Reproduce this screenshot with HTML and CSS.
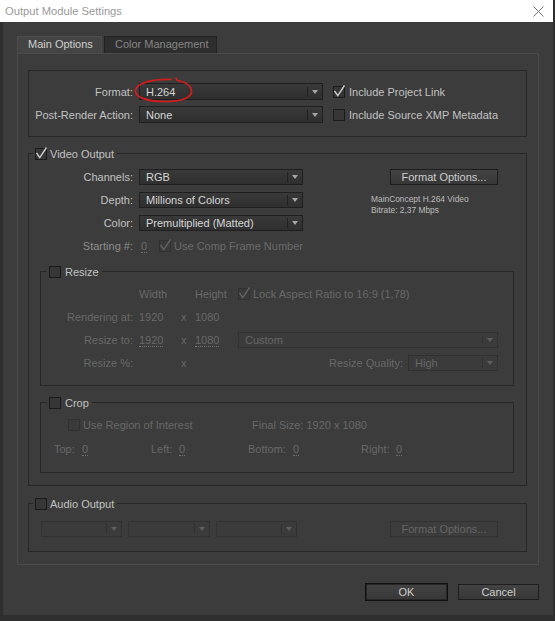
FILE: index.html
```html
<!DOCTYPE html>
<html>
<head>
<meta charset="utf-8">
<title>Output Module Settings</title>
<link rel="stylesheet" href="styles.css">
</head>
<body>
<div class="screen">
  <div class="titlebar">
    <span class="title">Output Module Settings</span>
    <svg class="close" width="11" height="11" viewBox="0 0 11 11"><path d="M0.5 0.5 L10.5 10.5 M10.5 0.5 L0.5 10.5"/></svg>
  </div>
  <div class="dialog">
    <div class="tabs">
      <div class="tab active">Main Options</div>
      <div class="tab inactive">Color Management</div>
    </div>
    <div class="panel">
      <div class="box format-box">
        <div class="form-grid">
          <span class="lbl">Format:</span>
          <div class="dd"><span class="v">H.264</span><i class="arr"></i></div>
          <div class="cb-row"><span class="cb"><svg class="chk" viewBox="0 0 12 12"><path d="M1.5 5 L4.8 9.6 L11.5 -0.5"/></svg></span><span>Include Project Link</span></div>
          <span class="lbl">Post-Render Action:</span>
          <div class="dd"><span class="v">None</span><i class="arr"></i></div>
          <div class="cb-row"><span class="cb"></span><span>Include Source XMP Metadata</span></div>
        </div>
      </div>

      <div class="group video">
        <div class="group-title"><span class="cb"><svg class="chk" viewBox="0 0 12 12"><path d="M1.5 5 L4.8 9.6 L11.5 -0.5"/></svg></span><span>Video Output</span></div>
        <div class="video-top">
          <div class="vgrid">
            <span class="lbl">Channels:</span>
            <div class="dd"><span class="v">RGB</span><i class="arr"></i></div>
            <span class="lbl">Depth:</span>
            <div class="dd"><span class="v">Millions of Colors</span><i class="arr"></i></div>
            <span class="lbl">Color:</span>
            <div class="dd"><span class="v">Premultiplied (Matted)</span><i class="arr"></i></div>
            <span class="lbl semi">Starting #:</span>
            <div class="start-cell">
              <span class="num"><span class="field">0</span></span>
              <span class="cb dis"><svg class="chk" viewBox="0 0 12 12"><path d="M1.5 5 L4.8 9.6 L11.5 -0.5"/></svg></span>
              <span class="dtext">Use Comp Frame Number</span>
            </div>
          </div>
          <div class="info">
            <div class="btn fmt-btn">Format Options...</div>
            <div class="meta">MainConcept H.264 Video<br>Bitrate: 2,37 Mbps</div>
          </div>
        </div>

        <div class="group sub resize">
          <div class="group-title"><span class="cb"></span><span>Resize</span></div>
          <div class="rgrid">
            <span></span>
            <span>Width</span>
            <span></span>
            <span>Height</span>
            <div class="lock"><span class="cb dis"><svg class="chk" viewBox="0 0 12 12"><path d="M1.5 5 L4.8 9.6 L11.5 -0.5"/></svg></span><span>Lock Aspect Ratio to 16:9 (1,78)</span></div>

            <span class="rl">Rendering at:</span>
            <span>1920</span>
            <span>x</span>
            <span>1080</span>
            <span></span>

            <span class="rl">Resize to:</span>
            <span><span class="field">1920</span></span>
            <span>x</span>
            <span><span class="field">1080</span></span>
            <div class="dd dis"><span class="v">Custom</span><i class="arr"></i></div>

            <span class="rl">Resize %:</span>
            <span></span>
            <span>x</span>
            <span></span>
            <div class="quality"><span>Resize Quality:</span><div class="dd dis q-dd"><span class="v">High</span><i class="arr"></i></div></div>
          </div>
        </div>

        <div class="group sub crop">
          <div class="group-title"><span class="cb"></span><span>Crop</span></div>
          <div class="crop-r1">
            <div class="roi"><span class="cb dis"></span><span>Use Region of Interest</span></div>
            <span>Final Size: 1920 x 1080</span>
          </div>
          <div class="crop-r2">
            <span>Top:</span><span><span class="field">0</span></span>
            <span>Left:</span><span><span class="field">0</span></span>
            <span>Bottom:</span><span><span class="field">0</span></span>
            <span>Right:</span><span><span class="field">0</span></span>
          </div>
        </div>
      </div>

      <div class="group audio">
        <div class="group-title"><span class="cb"></span><span>Audio Output</span></div>
        <div class="audio-row">
          <div class="dd dis a1"><span class="v"></span><i class="arr"></i></div>
          <div class="dd dis a2"><span class="v"></span><i class="arr"></i></div>
          <div class="dd dis a3"><span class="v"></span><i class="arr"></i></div>
          <div class="btn dis audio-btn">Format Options...</div>
        </div>
      </div>
    </div>

    <div class="actions">
      <div class="btn ok">OK</div>
      <div class="btn cancel">Cancel</div>
    </div>
  </div>

  <svg class="annot" width="68" height="34" viewBox="130 74 68 34">
    <path d="M171 79.5 C152 79 137.5 83 135.5 90 C134.5 97 146 101.5 165 101.5 C182 101.5 192 97.5 191.5 91 C191 85 185.5 82 177.5 80.5 L176 78"/>
  </svg>
</div>
</body>
</html>
```

FILE: styles.css
```css
* { box-sizing: border-box; }
html, body { margin: 0; padding: 0; }
body {
  background: #2f2f2f;
  font-family: "Liberation Sans", Arial, sans-serif;
  font-size: 11px;
  color: #c2c2c2;
}
.screen {
  position: relative;
  width: 555px;
  height: 621px;
  overflow: hidden;
}

/* title bar */
.titlebar {
  width: 553px;
  height: 22px;
  background: #ffffff;
  display: flex;
  align-items: center;
  justify-content: space-between;
  padding: 0 9px 0 5px;
}
.title { color: #9a9a9a; font-size: 11.2px; }
.close { stroke: #777; stroke-width: 1; fill: none; }

/* dialog */
.dialog {
  margin-left: 3px;
  width: 550px;
  height: 593px;
  background: #3c3c3c;
  padding: 14px 14px 0 14px;
}
.tabs { display: flex; gap: 2px; height: 17px; }
.tab {
  height: 17px;
  line-height: 15px;
  padding: 0 10px;
  border: 1px solid #262626;
  border-bottom: none;
  white-space: nowrap;
}
.tab.active { width: 85px; background: #444444; color: #cfcfcf; border-color: #4c4c4c; }
.tab.inactive { width: 113px; background: #2e2e2e; color: #868686; border-color: #232323; }

.panel {
  height: 512px;
  border: 1px solid #4a4a4a;
  padding: 16px 11px 0 10px;
}

.box, .group { border: 1px solid #272727; }

.format-box { height: 67px; padding-top: 12px; }
.form-grid {
  display: grid;
  grid-template-columns: 104px 184px auto;
  grid-template-rows: 17px 17px;
  column-gap: 6px;
  row-gap: 6px;
  align-items: center;
}
.lbl { text-align: right; white-space: nowrap; }
.lbl.semi { color: #8c8c8c; }

/* dropdown */
.dd {
  align-self: stretch;
  display: flex;
  align-items: center;
  border: 1px solid #1f1f1f;
  background: linear-gradient(#393939, #2f2f2f);
  padding-left: 6px;
  color: #d6d6d6;
  white-space: nowrap;
}
.dd .v { flex: 1; overflow: hidden; }
.arr {
  width: 15px;
  align-self: stretch;
  display: flex;
  align-items: center;
  justify-content: center;
  background: linear-gradient(#202020, #202020) left center / 1px 10px no-repeat;
}
.arr::after {
  content: "";
  border-left: 3px solid transparent;
  border-right: 3px solid transparent;
  border-top: 4px solid #a6a6a6;
}
.dd.dis {
  background: #3b3b3b;
  border-color: #313131;
  color: #666;
}
.dd.dis .arr { background-image: linear-gradient(#313131, #313131); }
.dd.dis .arr::after { border-top-color: #5e5e5e; }

/* checkbox */
.cb {
  width: 12px;
  height: 12px;
  flex: none;
  border: 1px solid #1b1b1b;
  background: #363636;
  display: inline-flex;
}
.cb.dis { border-color: #313131; background: #3a3a3a; }
.chk { width: 12px; height: 12px; margin: -1px; overflow: visible; fill: none; stroke: #cfcfcf; stroke-width: 1.4; }
.cb.dis .chk { stroke: #646464; }
.cb-row {
  display: flex;
  align-items: center;
  gap: 4px;
  margin-left: 4px;
  white-space: nowrap;
}

/* groups */
.group-title {
  display: flex;
  align-items: center;
  gap: 3px;
  width: max-content;
  height: 12px;
  margin: -6px 0 0 4px;
  padding: 0 3px 0 2px;
  background: #3c3c3c;
  white-space: nowrap;
}
.video { margin-top: 16px; height: 333px; }
.video-top { display: flex; margin-top: 9px; }
.vgrid {
  display: grid;
  grid-template-columns: 104px 164px;
  grid-auto-rows: 16px;
  column-gap: 6px;
  row-gap: 7px;
  align-items: center;
}
.start-cell { display: flex; align-items: center; white-space: nowrap; color: #6a6a6a; }
.num { width: 43px; padding-left: 2px; }
.dtext { margin-left: 3px; }
.field { border-bottom: 1px dotted #6f6f6f; }

.info { margin-left: 68px; }
.btn {
  height: 16px;
  border: 1px solid #1d1d1d;
  background: linear-gradient(#434343, #373737);
  color: #cdcdcd;
  display: flex;
  align-items: center;
  justify-content: center;
  white-space: nowrap;
}
.btn.dis { background: #3c3c3c; border-color: #313131; color: #656565; }
.fmt-btn { width: 108px; margin-left: 19px; }
.meta { margin-top: 9px; font-size: 8.4px; line-height: 11px; color: #bcbcbc; white-space: nowrap; }

.sub { margin: 17px 12px 0 11px; }
.sub .group-title { margin-left: 6px; gap: 4px; }
.resize { height: 115px; }
.rgrid {
  display: grid;
  grid-template-columns: 98px 42px 14px 43px 260px;
  grid-auto-rows: 16px;
  row-gap: 7px;
  margin-top: 8px;
  align-items: center;
  color: #686868;
  white-space: nowrap;
}
.rl { text-align: right; padding-right: 6px; }
.lock { display: flex; align-items: center; gap: 3px; }
.quality { display: flex; align-items: center; justify-content: flex-end; gap: 5px; align-self: stretch; }
.q-dd { width: 90px; }

.crop { margin-top: 16px; height: 71px; color: #686868; }
.crop .group-title { color: #c2c2c2; }
.crop-r1 { display: flex; align-items: center; height: 16px; margin-top: 8px; padding-left: 27px; white-space: nowrap; }
.roi { width: 184px; display: flex; align-items: center; gap: 3px; }
.crop-r2 {
  display: grid;
  grid-template-columns: 28px 69px 28px 69px 45px 68px 35px auto;
  height: 16px;
  margin-top: 8px;
  padding-left: 13px;
  align-items: center;
}

.audio { margin-top: 17px; height: 49px; }
.audio-row { display: flex; align-items: stretch; gap: 6px; margin: 11px 0 0 12px; height: 16px; }
.a1 { width: 81px; }
.a2 { width: 82px; }
.a3 { width: 81px; }
.audio-btn { width: 108px; margin-left: 87px; }

.actions {
  display: flex;
  justify-content: flex-end;
  align-items: center;
  gap: 10px;
  margin-top: 18px;
  height: 18px;
}
.ok { width: 83px; height: 18px; border-color: #0f0f0f; box-shadow: inset 0 0 0 1px #262626; }
.cancel { width: 81px; height: 16px; }

.annot {
  position: absolute;
  left: 130px;
  top: 74px;
  fill: none;
  stroke: #d31c1c;
  stroke-width: 1.7;
  stroke-linecap: round;
}
```
